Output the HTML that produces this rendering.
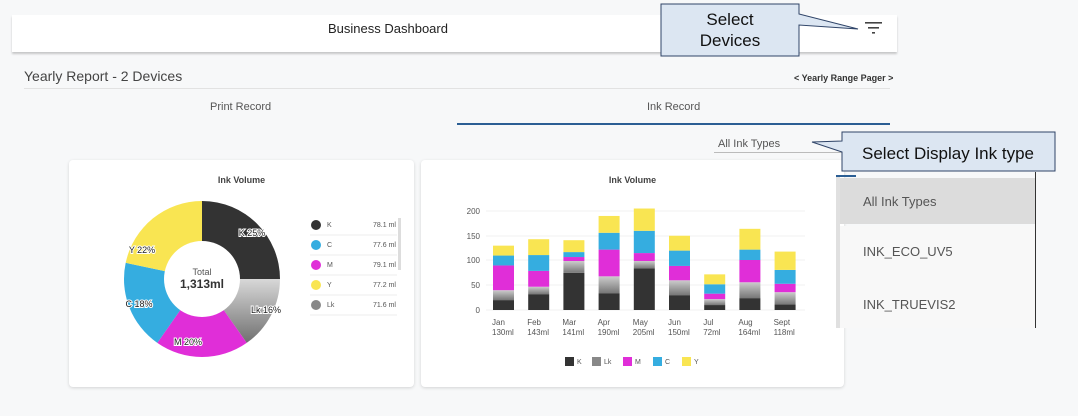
<!DOCTYPE html><html><head><style>
body{margin:0;width:1078px;height:416px;background:#f7f8f9;font-family:"Liberation Sans",sans-serif;position:relative;overflow:hidden;color:#333}
.a{position:absolute}
.card{position:absolute;background:#fff;border-radius:4px;box-shadow:0 1px 3px rgba(0,0,0,.15)}
</style></head><body>
<div class="a" style="left:12px;top:15px;width:885px;height:37px;background:#fff;box-shadow:0 2px 2px rgba(0,0,0,.2)"></div>
<div class="a" style="left:12px;top:21px;width:752px;text-align:center;font-size:13px;color:#222">Business Dashboard</div>
<svg class="a" style="left:864px;top:20px" width="20" height="16"><rect x="1" y="2" width="17" height="1.6" fill="#444"/><rect x="4" y="7" width="11" height="1.6" fill="#444"/><rect x="8" y="12" width="3" height="1.6" fill="#444"/></svg>
<div class="a" style="left:24px;top:68px;font-size:14px;color:#444">Yearly Report - 2 Devices</div>
<div class="a" style="left:794px;top:73px;font-size:9px;color:#333;font-weight:bold">&lt; Yearly Range Pager &gt;</div>
<div class="a" style="left:24px;top:88px;width:866px;height:1px;background:#e2e2e2"></div>
<div class="a" style="left:210px;top:101px;font-size:11px;color:#555">Print Record</div>
<div class="a" style="left:647px;top:101px;font-size:11px;color:#555">Ink Record</div>
<div class="a" style="left:457px;top:123px;width:433px;height:2px;background:#2b5e94"></div>
<div class="a" style="left:718px;top:138px;font-size:11px;color:#555">All Ink Types</div>
<div class="a" style="left:714px;top:152px;width:130px;height:1px;background:#bbb"></div>

<div class="card" style="left:69px;top:160px;width:345px;height:227px"></div>
<div class="card" style="left:421px;top:160px;width:423px;height:227px"></div>
<div class="a" style="left:69px;top:175px;width:345px;text-align:center;font-size:9px;color:#444;font-weight:bold">Ink Volume</div>
<div class="a" style="left:421px;top:175px;width:423px;text-align:center;font-size:9px;color:#444;font-weight:bold">Ink Volume</div>

<svg class="a" style="left:0;top:0" width="420" height="416">
<defs><linearGradient id="g" x1="0" y1="0" x2="0" y2="1"><stop offset="0" stop-color="#d8d8d8"/><stop offset="1" stop-color="#707070"/></linearGradient></defs>
<g transform="translate(202,279)">
<path d="M0,-78 A78,78 0 0 1 78,0 L0,0Z" fill="#333"/>
<path d="M78,0 A78,78 0 0 1 44.7,63.9 L0,0Z" fill="url(#g)"/>
<path d="M44.7,63.9 A78,78 0 0 1 -44.7,63.9 L0,0Z" fill="#e02ed8"/>
<path d="M-44.7,63.9 A78,78 0 0 1 -76.3,-16.2 L0,0Z" fill="#35ade0"/>
<path d="M-76.3,-16.2 A78,78 0 0 1 0,-78 L0,0Z" fill="#f9e552"/>
<circle r="38" fill="#fff"/>
<text y="-4" text-anchor="middle" font-size="9" fill="#555">Total</text>
<text y="9" text-anchor="middle" font-size="12" fill="#333" font-weight="bold">1,313ml</text>
<g font-size="9" fill="#222" stroke="#fff" stroke-width="2" paint-order="stroke" text-anchor="middle">
<text x="50" y="-43">K 25%</text><text x="64" y="34">Lk 16%</text><text x="-14" y="66">M 20%</text><text x="-60" y="-26">Y 22%</text><text x="-63" y="28">C 18%</text></g>
</g>
<g font-size="7" fill="#555">
<circle cx="316" cy="225" r="5" fill="#333"/><text x="327" y="227">K</text><text x="373" y="227">78.1 ml</text><line x1="310" x2="397" y1="235" y2="235" stroke="#eee"/>
<circle cx="316" cy="245" r="5" fill="#35ade0"/><text x="327" y="247">C</text><text x="373" y="247">77.6 ml</text><line x1="310" x2="397" y1="255" y2="255" stroke="#eee"/>
<circle cx="316" cy="265" r="5" fill="#e02ed8"/><text x="327" y="267">M</text><text x="373" y="267">79.1 ml</text><line x1="310" x2="397" y1="275" y2="275" stroke="#eee"/>
<circle cx="316" cy="285" r="5" fill="#f9e552"/><text x="327" y="287">Y</text><text x="373" y="287">77.2 ml</text><line x1="310" x2="397" y1="295" y2="295" stroke="#eee"/>
<circle cx="316" cy="305" r="5" fill="#888"/><text x="327" y="307">Lk</text><text x="373" y="307">71.6 ml</text><line x1="310" x2="397" y1="315" y2="315" stroke="#eee"/>
</g>
<rect x="398" y="218" width="3" height="52" fill="#ddd"/>
</svg>

<svg class="a" style="left:420px;top:0" width="420" height="416" font-size="8" fill="#555">
<g stroke="#f0f0f0"><line x1="66" x2="385" y1="211" y2="211"/><line x1="66" x2="385" y1="236" y2="236"/><line x1="66" x2="385" y1="260" y2="260"/><line x1="66" x2="385" y1="285" y2="285"/><line x1="66" x2="385" y1="310" y2="310"/></g>
<g text-anchor="end"><text x="60" y="214">200</text><text x="60" y="239">150</text><text x="60" y="263">100</text><text x="60" y="288">50</text><text x="60" y="313">0</text></g>
<g id="bars"></g>
<g font-size="7"><rect x="145" y="357" width="9" height="9" fill="#333"/><text x="157" y="364">K</text>
<rect x="172" y="357" width="9" height="9" fill="#888"/><text x="184" y="364">Lk</text>
<rect x="203" y="357" width="9" height="9" fill="#e02ed8"/><text x="215" y="364">M</text>
<rect x="233" y="357" width="9" height="9" fill="#35ade0"/><text x="245" y="364">C</text>
<rect x="262" y="357" width="9" height="9" fill="#f9e552"/><text x="274" y="364">Y</text></g>
</svg>
<script>
var d=[["Jan",130,[20,40,90,110,130]],["Feb",143,[32,47,79,111,143]],["Mar",141,[75,99,107,117,141]],["Apr",190,[34,68,122,156,190]],["May",205,[84,99,115,160,205]],["Jun",150,[30,60,89,120,150]],["Jul",72,[10,22,33,52,72]],["Aug",164,[24,56,101,122,164]],["Sept",118,[11,36,53,81,118]]];
var c=["#333","url(#g2)","#e02ed8","#35ade0","#f9e552"],s='<defs><linearGradient id="g2" x1="0" y1="0" x2="0" y2="1"><stop offset="0" stop-color="#ccc"/><stop offset="1" stop-color="#777"/></linearGradient></defs>';
d.forEach(function(m,i){var x=73+i*35.2,p=0;m[2].forEach(function(v,j){var y0=310-p*0.495,y1=310-v*0.495;s+='<rect x="'+x+'" y="'+y1+'" width="21" height="'+(y0-y1)+'" fill="'+c[j]+'"/>';p=v;});
s+='<text x="'+(x-1)+'" y="325">'+m[0]+'</text><text x="'+(x-1)+'" y="335">'+m[1]+'ml</text>';});
document.getElementById('bars').innerHTML=s;
</script>

<div class="a" style="left:836px;top:176px;width:4px;height:152px;background:#e0e0e0"></div>
<div class="a" style="left:836px;top:175px;width:20px;height:2px;background:#2b5e94"></div>
<div class="a" style="left:840px;top:178px;width:195px;height:46px;background:#dcdcdc"></div>
<div class="a" style="left:840px;top:226px;width:195px;height:102px;background:#f8f8f8"></div>
<div class="a" style="left:1035px;top:172px;width:1px;height:156px;background:#333"></div>
<div class="a" style="left:863px;top:194px;font-size:13px;color:#555">All Ink Types</div>
<div class="a" style="left:863px;top:244px;font-size:13px;color:#555">INK_ECO_UV5</div>
<div class="a" style="left:863px;top:297px;font-size:13px;color:#555">INK_TRUEVIS2</div>

<svg class="a" style="left:0;top:0" width="1078" height="416">
<path d="M661,4 H799 V14 L858,29 L799,25 V56 H661Z" fill="#dce6f2" stroke="#2f4468" stroke-width="1"/>
<path d="M842,132 H1055 V171 H842 V152 L812,142 L842,141Z" fill="#dce6f2" stroke="#2f4468" stroke-width="1"/>
<g font-family="Liberation Sans, sans-serif" font-size="17" fill="#111" text-anchor="middle">
<text x="730" y="25">Select</text><text x="730" y="46">Devices</text>
<text x="948" y="159">Select Display Ink type</text></g>
</svg>
</body></html>
